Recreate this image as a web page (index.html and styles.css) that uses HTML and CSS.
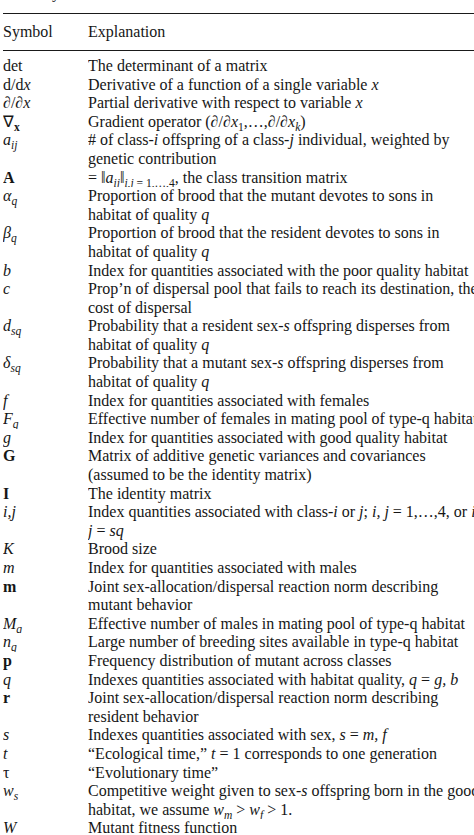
FILE: index.html
```html
<!DOCTYPE html>
<html>
<head>
<meta charset="utf-8">
<link rel="stylesheet" href="styles.css">
</head>
<body>
<div class="page">
  <div class="caption">Glossary</div>
  <div class="head">
    <div>Symbol</div><div>Explanation</div>
  </div>
  <div class="rows">
    <div>det</div><div>The determinant of a matrix</div>
    <div>d/d<i>x</i></div><div>Derivative of a function of a single variable <i>x</i></div>
    <div>∂/∂<i>x</i></div><div>Partial derivative with respect to variable <i>x</i></div>
    <div>∇<sub><b>x</b></sub></div><div>Gradient operator (∂/∂<i>x</i><sub>1</sub>,…,∂/∂<i>x<sub>k</sub></i>)</div>
    <div><i>a<sub>ij</sub></i></div><div># of class-<i>i</i> offspring of a class-<i>j</i> individual, weighted by<br>genetic contribution</div>
    <div><b>A</b></div><div>= ‖<i>a<sub>ij</sub></i>‖<sub><i>i,j</i> = 1,…,4</sub>, the class transition matrix</div>
    <div><i>α<sub>q</sub></i></div><div>Proportion of brood that the mutant devotes to sons in<br>habitat of quality <i>q</i></div>
    <div><i>β<sub>q</sub></i></div><div>Proportion of brood that the resident devotes to sons in<br>habitat of quality <i>q</i></div>
    <div><i>b</i></div><div>Index for quantities associated with the poor quality habitat</div>
    <div><i>c</i></div><div>Prop’n of dispersal pool that fails to reach its destination, the<br>cost of dispersal</div>
    <div><i>d<sub>sq</sub></i></div><div>Probability that a resident sex-<i>s</i> offspring disperses from<br>habitat of quality <i>q</i></div>
    <div><i>δ<sub>sq</sub></i></div><div>Probability that a mutant sex-<i>s</i> offspring disperses from<br>habitat of quality <i>q</i></div>
    <div><i>f</i></div><div>Index for quantities associated with females</div>
    <div><i>F<sub>q</sub></i></div><div>Effective number of females in mating pool of type-q habitat</div>
    <div><i>g</i></div><div>Index for quantities associated with good quality habitat</div>
    <div><b>G</b></div><div>Matrix of additive genetic variances and covariances<br>(assumed to be the identity matrix)</div>
    <div><b>I</b></div><div>The identity matrix</div>
    <div><i>i,j</i></div><div>Index quantities associated with class-<i>i</i> or <i>j</i>; <i>i, j</i> = 1,…,4, or <i>i,</i><br><i>j</i> = <i>sq</i></div>
    <div><i>K</i></div><div>Brood size</div>
    <div><i>m</i></div><div>Index for quantities associated with males</div>
    <div><b>m</b></div><div>Joint sex-allocation/dispersal reaction norm describing<br>mutant behavior</div>
    <div><i>M<sub>q</sub></i></div><div>Effective number of males in mating pool of type-q habitat</div>
    <div><i>n<sub>q</sub></i></div><div>Large number of breeding sites available in type-q habitat</div>
    <div><b>p</b></div><div>Frequency distribution of mutant across classes</div>
    <div><i>q</i></div><div>Indexes quantities associated with habitat quality, <i>q</i> = <i>g, b</i></div>
    <div><b>r</b></div><div>Joint sex-allocation/dispersal reaction norm describing<br>resident behavior</div>
    <div><i>s</i></div><div>Indexes quantities associated with sex, <i>s</i> = <i>m, f</i></div>
    <div><i>t</i></div><div>“Ecological time,” <i>t</i> = 1 corresponds to one generation</div>
    <div>τ</div><div>“Evolutionary time”</div>
    <div><i>w<sub>s</sub></i></div><div>Competitive weight given to sex-<i>s</i> offspring born in the good<br>habitat, we assume <i>w<sub>m</sub></i> &gt; <i>w<sub>f</sub></i> &gt; 1.</div>
    <div><i>W</i></div><div>Mutant fitness function</div>
  </div>
</div>
</body>
</html>
```

FILE: styles.css
```css
html, body {
  margin: 0;
  padding: 0;
  background: #fff;
  overflow: hidden;
}
.page {
  font-family: "Liberation Serif", "Times New Roman", serif;
  font-size: 16px;
  line-height: 18.6px;
  color: #161616;
  padding-left: 3px;
  white-space: nowrap;
  overflow: hidden;
}
.caption {
  margin-top: -16.5px;
  margin-bottom: 10.8px;
}
.head {
  display: grid;
  grid-template-columns: 85px 1fr;
  border-top: 1.6px solid #1a1a1a;
  border-bottom: 1.6px solid #1a1a1a;
  padding: 9px 0 8.5px;
}
.rows {
  display: grid;
  grid-template-columns: 85px 1fr;
  padding-top: 6px;
}
.rows > div {
  overflow: hidden;
}
sub {
  font-size: 0.72em;
  line-height: 0;
  vertical-align: -0.32em;
}
sub sub {
  font-size: 1em;
  vertical-align: 0;
}
b {
  font-weight: bold;
}
```
